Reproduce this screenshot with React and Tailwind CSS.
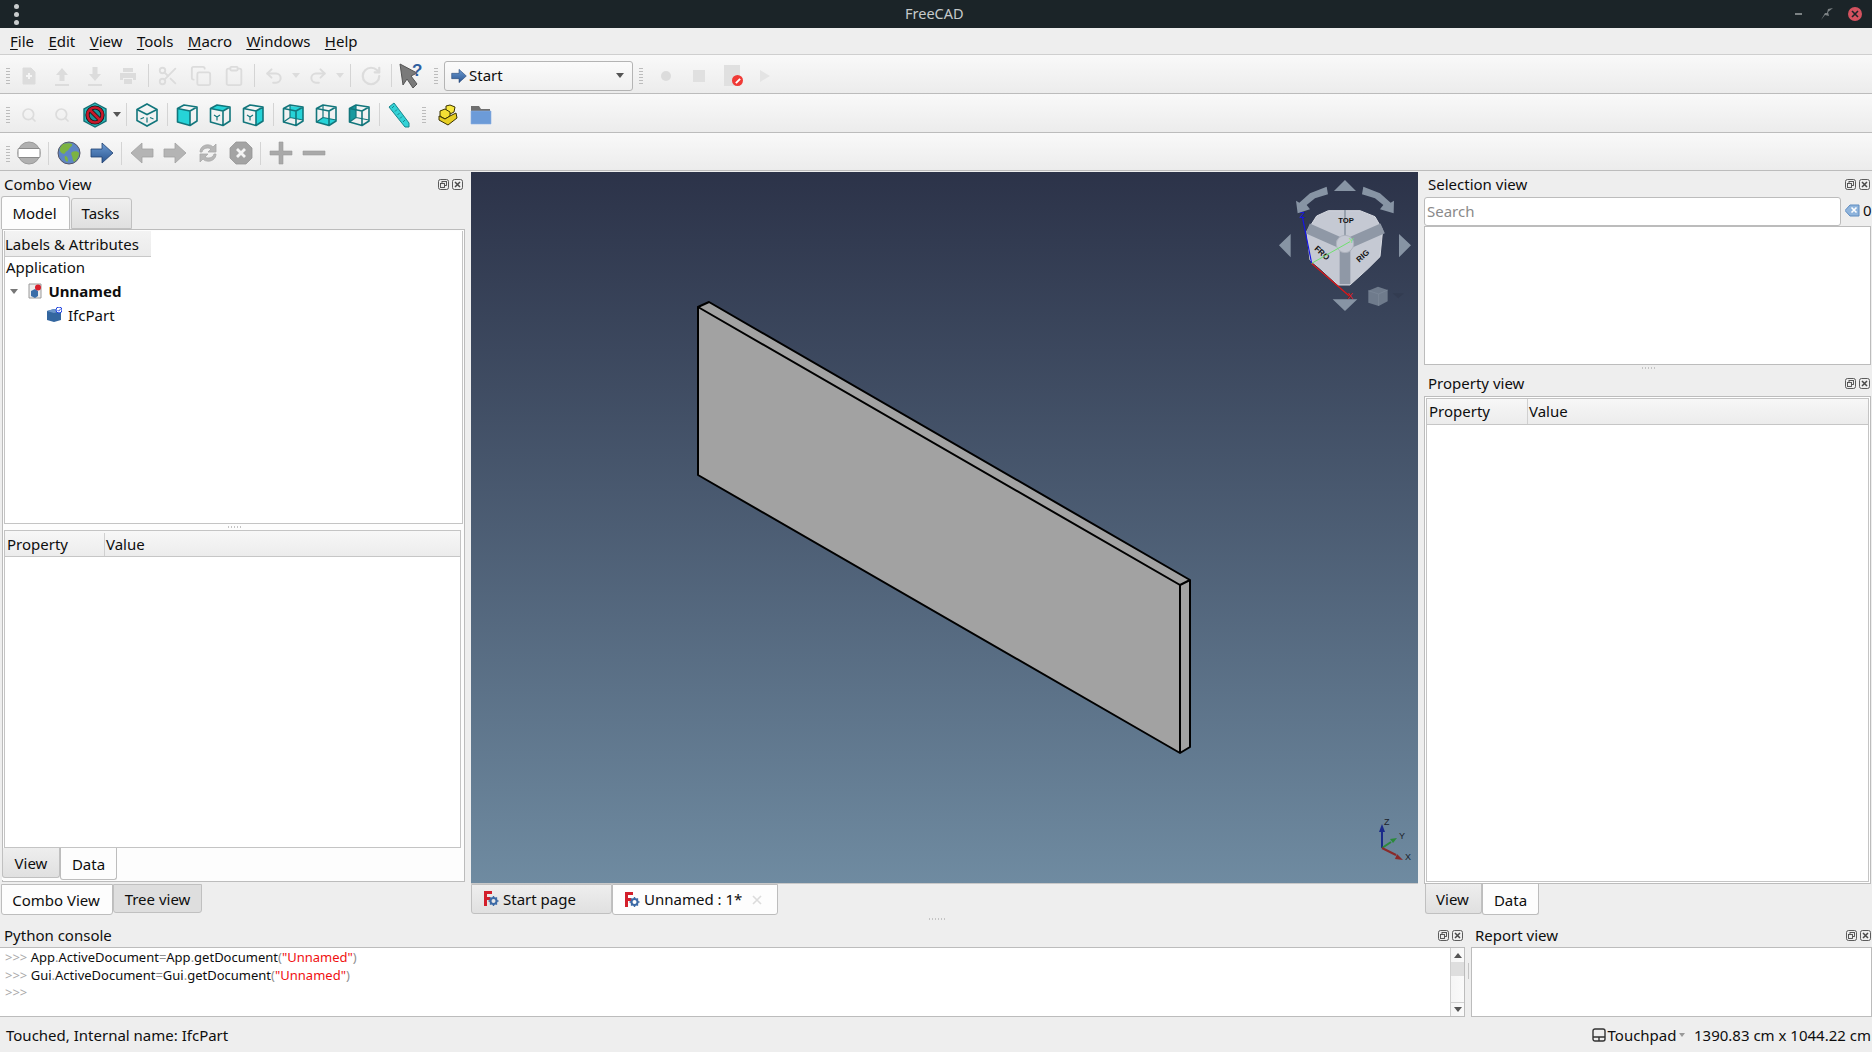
import React from "react";
import { Scissors, Copy, Clipboard, Undo2, Redo2, RotateCw, Search } from "lucide-react";

const D = "#dcdcdc";

const Slot = ({ children, w = "w-[33px]" }) => (
  <div className={`${w} h-full flex items-center justify-center shrink-0`}>{children}</div>
);
const Grip = ({ w = "w-[8px]" }) => (
  <div className={`${w} h-full flex items-center justify-center shrink-0`}>
    <div className="w-[4px] h-[17px] bg-[radial-gradient(circle,#bcbcbc_0.7px,transparent_0.9px)] bg-[length:2px_3px]" />
  </div>
);
const Sep = ({ w = "w-[7px]" }) => (
  <div className={`${w} h-full flex items-center justify-center shrink-0`}>
    <div className="w-[1px] h-[23px] bg-[#d4d4d4]" />
  </div>
);
const Drop = ({ w = "w-[11px]", color = "#dcdcdc" }) => (
  <div className={`${w} h-full flex items-center justify-center shrink-0`}>
    <svg width="8" height="5" viewBox="0 0 8 5"><path d="M0 0h8L4 5z" fill={color} /></svg>
  </div>
);
const Bar = ({ children, h }) => (
  <div className={`${h} shrink-0 flex items-center pl-[4px] pt-[3px] border-b border-[#bcbcbc] bg-gradient-to-b from-[#f9f9f9] to-[#ececec]`}>{children}</div>
);

const Ic = ({ children, s = 24, vb = "0 0 24 24" }) => <svg width={s} height={s} viewBox={vb}>{children}</svg>;

const NewDoc = () => <Ic><path d="M6 4h8l4 4v12H6z" fill={D} stroke={D} strokeLinejoin="round" /><path d="M12 9v6M9 12h6" stroke="#f5f5f5" strokeWidth="2" /></Ic>;
const Up = () => <Ic><path d="M12 4l6 7h-3.5v6h-5v-6H6z M5 20h14v2H5z" fill={D} /></Ic>;
const Down = () => <Ic><path d="M9.5 3h5v7H18l-6 7-6-7h3.5z M5 20h14v2H5z" fill={D} /></Ic>;
const Print = () => <Ic><path d="M7 4h10v4H7z M4 9h16v7h-3v-2H7v2H4z M8 15h8v5H8z" fill={D} /></Ic>;

const WhatsThis = () => (
  <svg width="26" height="28" viewBox="0 0 26 28">
    <path d="M2 2l17 9-6 3 6 8-4 4-6-9-4 6z" fill="#7a7a7a" stroke="#555" strokeWidth="1" />
    <text x="14" y="14" fontFamily="Liberation Sans" fontWeight="700" fontSize="17" fill="#2f5f9f">?</text>
  </svg>
);
const BlueArrow = ({ s = 24, a = "#6b9ad2", b = "#2a5590" }) => (
  <svg width={s} height={s} viewBox="0 0 24 24">
    <defs><linearGradient id={`ba${s}`} x1="0" y1="0" x2="0" y2="1"><stop offset="0" stopColor={a} /><stop offset="1" stopColor={b} /></linearGradient></defs>
    <path d="M1 8h11V2l11 10-11 10v-6H1z" fill={`url(#ba${s})`} stroke="#1e3f6f" strokeWidth="0.8" />
  </svg>
);
const GreyArrow = ({ left }) => (
  <svg width="24" height="24" viewBox="0 0 24 24">
    <g transform={left ? "translate(24 0) scale(-1 1)" : undefined}>
      <path d="M1 8h11V2l11 10-11 10v-6H1z" fill="#b4b4b4" stroke="#a2a2a2" strokeWidth="0.8" />
    </g>
  </svg>
);
const NoHex = () => (
  <svg width="24" height="26" viewBox="0 0 24 26">
    <path d="M12 1l11 6v12l-11 6-11-6V7z" fill="#27b8bb" stroke="#146f74" strokeWidth="1.4" />
    <circle cx="12" cy="13" r="7.5" fill="#1c8f94" stroke="#161616" strokeWidth="4.2" />
    <path d="M7 8l10 10" stroke="#161616" strokeWidth="4.2" />
    <circle cx="12" cy="13" r="7.5" fill="none" stroke="#c8182a" strokeWidth="2.6" />
    <path d="M7 8l10 10" stroke="#c8182a" strokeWidth="2.6" />
  </svg>
);
const C = "#12767c";
const F = "#26d3d8";
const Cube = ({ v }) => {
  const faces = {
    front: "M2.5 5.5L15 8v14.5L2.5 19z",
    top: "M2.5 5.5L9 2l13 2-7 4z",
    right: "M15 8l7-4v14l-7 4.5z",
    rear: "M9 3L22 4.5V17L9 14.5z",
    bottom: "M2.5 19L9 14.5l13 2.5-7 5.5z",
    left: "M2.5 5.5L9 2.5v12L2.5 19z",
  };
  if (v === "iso") {
    return (
      <svg width="24" height="24" viewBox="0 0 24 24" fill="none" stroke={C} strokeWidth="1.6">
        <path d="M12 1l10 5.5v11L12 23 2 17.5v-11z" />
        <path d="M2 6.5l10 5 10-5" />
        <path d="M12 14.5v5M5.5 16l3.5-1.5M18.5 16L15 14.5" strokeWidth="1.2" />
      </svg>
    );
  }
  const solid = v === "front" || v === "top" || v === "right";
  return (
    <svg width="24" height="24" viewBox="0 0 24 24" fill="none" stroke={C} strokeWidth="1.6" strokeLinejoin="round">
      <path d={faces[v]} fill={v === "left" ? "#169aa0" : F} stroke="none" />
      <path d="M2.5 5.5L9 2l13 2-7 4zM15 8v14.5M2.5 5.5L15 8M22 4v14l-7 4.5L2.5 19V5.5" />
      {solid ? (
        v !== "front" && <path d="M9 17.5v-3.5M9 14l-3-2M9 14l3-2" strokeWidth="1.2" />
      ) : (
        <path d="M9 2.5V14.5L2.5 19M9 14.5L22 17" strokeWidth="1.2" />
      )}
    </svg>
  );
};
const Ruler = () => (
  <svg width="22" height="26" viewBox="0 0 22 26">
    <path d="M1 5L6 1l15 20v4l-4 0z" fill="#33d2d6" stroke="#15868c" strokeWidth="1" />
    <path d="M6 4l-2 2M9 7.5l-2 2M11.5 11l-2 2M14 14.5l-2 2M17 18l-2 2" stroke="#15868c" strokeWidth="1" />
  </svg>
);
const Part = () => (
  <svg width="20" height="22" viewBox="0 0 20 22" stroke="#3a3200" strokeWidth="1" strokeLinejoin="round">
    <path d="M8 2l4-1 5 2-1 5-4 2-4-2z" fill="#f8e840" />
    <path d="M2 7l5-2 5 3v4l-5 3-5-3z" fill="#f4de34" />
    <path d="M1 12l6 3 5-3 6-3 1 5-9 7-9-5z" fill="#e8cf24" />
  </svg>
);
const Folder = () => (
  <svg width="22" height="20" viewBox="0 0 22 20">
    <path d="M1 1h8l2 3h9v15H1z" fill="#6f6f6f" />
    <path d="M1 6h20v13H1z" fill="#6c9bd8" stroke="#8ab0e2" strokeWidth="0.6" />
  </svg>
);
const PageGlobe = () => (
  <svg width="24" height="24" viewBox="0 0 24 24">
    <circle cx="12" cy="12" r="11" fill="#b0b0b0" stroke="#9a9a9a" />
    <rect x="1" y="7.5" width="22" height="9" rx="1" fill="#fff" stroke="#8a8a8a" />
  </svg>
);
const Globe = () => (
  <svg width="24" height="24" viewBox="0 0 24 24">
    <circle cx="12" cy="12" r="11" fill="#5e86c4" stroke="#556" strokeWidth="1" />
    <path d="M6 3c3-1 7-1 9 0 1 2-2 3-3 5s-3 2-4 4-4 0-5-2 1-5 3-7zM15 11c2-1 6-1 7 1 0 4-3 8-5 9-2-2-1-4-2-6s-1-3 0-4zM8 15c2 0 3 2 3 4s-1 2-2 1-2-4-1-5z" fill="#7cb342" />
  </svg>
);
const Refresh = () => (
  <svg width="24" height="24" viewBox="0 0 24 24" fill="none">
    <path d="M4 11C4 6 9 3 13 4c2 0 3 1 4 2l3-3v8h-8l3-3c-3-2-8-1-9 3z" fill="#b7b7b7" stroke="#a8a8a8" strokeWidth="0.8" />
    <path d="M20 13c0 5-5 8-9 7-2 0-3-1-4-2l-3 3v-8h8l-3 3c3 2 8 1 9-3z" fill="#b7b7b7" stroke="#a8a8a8" strokeWidth="0.8" />
  </svg>
);
const StopX = () => (
  <svg width="24" height="24" viewBox="0 0 24 24">
    <path d="M7 1h10l6 6v10l-6 6H7l-6-6V7z" fill="#a3a3a3" stroke="#959595" strokeWidth="0.8" />
    <path d="M8 8l8 8M16 8l-8 8" stroke="#f4f4f4" strokeWidth="2.8" />
  </svg>
);
const Plus = () => <Ic><path d="M10 1h4v9h9v4h-9v9h-4v-9H1v-4h9z" fill="#a9a9a9" stroke="#9a9a9a" strokeWidth="0.6" /></Ic>;
const Minus = () => <Ic><path d="M1 10h22v4H1z" fill="#a9a9a9" stroke="#9a9a9a" strokeWidth="0.6" /></Ic>;

const DockBtns = () => (
  <div className="flex gap-[3px]">
    <svg width="11" height="11" viewBox="0 0 11 11" fill="none" stroke="#4a4a4a" strokeWidth="0.9"><rect x="0.5" y="0.5" width="10" height="10" rx="2" /><rect x="4" y="2.5" width="4.5" height="4" /><rect x="2.5" y="4.5" width="4" height="4" fill="#eee" /></svg>
    <svg width="11" height="11" viewBox="0 0 11 11" fill="none" stroke="#4a4a4a"><rect x="0.5" y="0.5" width="10" height="10" rx="2" strokeWidth="0.9" /><path d="M3 3l5 5M8 3l-5 5" strokeWidth="1.5" /></svg>
  </div>
);

const DocIcon = () => (
  <svg width="14" height="16" viewBox="0 0 14 16">
    <path d="M1 1h12v14H1z" fill="#ededed" stroke="#9a9a9a" />
    <path d="M3 8l4-2 3 2v5l-3 2-4-2z" fill="#3a6da8" />
    <circle cx="10" cy="4.5" r="3" fill="#d8202c" />
  </svg>
);
const PartIcon = () => (
  <svg width="16" height="16" viewBox="0 0 16 16">
    <path d="M1 4l7-2 7 2v9l-7 2-7-2z" fill="#33669f" />
    <path d="M1 4l7-2 7 2-7 2z" fill="#6a95c9" />
    <circle cx="13" cy="3" r="3" fill="#fff" stroke="#1c3fe0" strokeWidth="1" />
    <path d="M11.5 3l1.2 1.2 2-2.4" stroke="#1c3fe0" fill="none" strokeWidth="0.9" />
  </svg>
);
const FcIcon = () => (
  <svg width="16" height="16" viewBox="0 0 16 16">
    <path d="M1 0h8v3H4v3h3v3H4v6H1z" fill="#d31f2b" />
    <circle cx="10.5" cy="10" r="3" fill="none" stroke="#3c6aa6" strokeWidth="2" />
    <path d="M10.5 5v2M10.5 13v2M5.5 10h2M13.5 10h2M7 6.5l1.4 1.4M12.6 12.1l1.4 1.4M14 6.5l-1.4 1.4M8.4 12.1L7 13.5" stroke="#3c6aa6" strokeWidth="1.4" />
  </svg>
);

const Header = ({ first, pad = "" }) => (
  <div className={`h-[26px] shrink-0 flex border-b border-[#c6c6c6] bg-gradient-to-b from-[#f7f7f7] to-[#ececec] ${pad}`}>
    <div className={`${first} pl-[2px] flex items-center border-r border-[#d0d0d0]`}>Property</div>
    <div className="pl-[1px] flex items-center">Value</div>
  </div>
);

const TabOn = ({ cls = "", children }) => (
  <div className={`${cls} bg-[#fdfdfd] border border-[#bdbdbd] flex items-center justify-center shrink-0`}>{children}</div>
);
const TabOff = ({ cls = "", children }) => (
  <div className={`${cls} bg-gradient-to-b from-[#eeeeee] to-[#e0e0e0] border border-[#c0c0c0] flex items-center justify-center shrink-0`}>{children}</div>
);

const Viewport = () => (
  <div className="relative w-[947px] h-[711px] shrink-0 bg-gradient-to-b from-[#2c3349] to-[#6f8ba1]">
    <svg className="absolute inset-0" width="947" height="711" viewBox="471 172 947 711">
      <path d="M698 307L709 302L1190 580V747L1180 753L698 475Z" fill="#a2a2a2" stroke="#000" strokeWidth="2" strokeLinejoin="round" />
      <path d="M698 307L1180 585V753M1180 585L1190 580" fill="none" stroke="#000" strokeWidth="2" />
      <g transform="translate(1260 160) scale(0.3333)">
        <path d="M255 60l33 33h-66zM218 418h74l-37 35zM57 256l35-34v70zM453 256l-36-34v70z" fill="#8794a4" />
        <path d="M200 80l4 23-39 12-25 20 10 13-37 12-5-38 10 6 32-28z" fill="#8794a4" />
        <path d="M310 80l-4 23 39 12 25 20-10 13 41 12 1-38-10 6-32-28z" fill="#8794a4" />
        <path d="M170 168l35-16h95l45 18 23 40-8 80-35 35-55 50h-35l-55-50-30-25-10-85z" fill="#c5c9d3" stroke="#d8dbe2" strokeWidth="3" />
        <path d="M143 205l112 50 113-50M255 255v118" fill="none" stroke="#8f98a6" strokeWidth="32" />
        <path d="M255 150v80" stroke="#8f98a6" strokeWidth="5" />
        <circle cx="255" cy="252" r="26" fill="#c5c9d3" stroke="#aeb3bd" strokeWidth="3" />
        <text x="235" y="188" fontSize="23" fontFamily="Liberation Sans" fontWeight="700" fill="#111">TOP</text>
        <text transform="translate(162 268) rotate(42)" fontSize="24" fontFamily="Liberation Sans" fontWeight="700" fill="#111">FRO</text>
        <text transform="translate(298 308) rotate(-42)" fontSize="24" fontFamily="Liberation Sans" fontWeight="700" fill="#111">RIG</text>
        <path d="M155 310L127 170" stroke="#1414e6" strokeWidth="3.5" />
        <path d="M155 310L268 408" stroke="#e61414" strokeWidth="3.5" />
        <path d="M155 310L270 245" stroke="#6fe06f" strokeWidth="3" />
        <text x="119" y="174" fontSize="26" fontFamily="Liberation Sans" fill="#1414e6">Z</text>
        <text x="262" y="418" fontSize="26" fontFamily="Liberation Sans" fill="#e61414">X</text>
        <text x="266" y="248" fontSize="24" fontFamily="Liberation Sans" fill="#6fe06f">Y</text>
        <path d="M325 392l29-12 29 10v34l-27 14-31-10z" fill="#6f7b8c" />
        <path d="M325 392l31 10 27-12M356 402v36" fill="none" stroke="#7f8b9b" strokeWidth="2" />
        <path d="M398 400h34l-17 15z" fill="#333c51" />
      </g>
      <path d="M1382 848v-18" stroke="#1a2a8a" strokeWidth="2" />
      <path d="M1382 824l3 8h-6z" fill="#1a2a8a" />
      <path d="M1382 848l9-6" stroke="#2b8a3a" strokeWidth="2" />
      <path d="M1397 838l-7 1 3 4z" fill="#2b8a3a" />
      <path d="M1382 848l14 7" stroke="#8a2a2a" strokeWidth="2" />
      <path d="M1403 860l-8-1 2-5z" fill="#8a2a2a" />
      <text x="1384" y="825" fontSize="9" fontFamily="Liberation Sans" fill="#1b1f2a">Z</text>
      <text x="1399" y="839" fontSize="9" fontFamily="Liberation Sans" fill="#1b1f2a">Y</text>
      <text x="1405" y="860" fontSize="9" fontFamily="Liberation Sans" fill="#1b1f2a">X</text>
    </svg>
  </div>
);

const Dots = ({ cls }) => <div className={`${cls} bg-[radial-gradient(circle,#c4c4c4_0.7px,transparent_0.9px)] bg-[length:3px_2px]`} />;

const Py = ({ a, b, c }) => (
  <div className="h-[17.5px] flex items-center whitespace-pre">
    <span className="text-[#a8a8a8]">{">>> "}</span>
    <span>{a}</span><span className="text-[#909090]">.</span><span>{b}</span><span className="text-[#909090]">=</span>
    <span>{a}</span><span className="text-[#909090]">.</span><span>{c}</span>
    <span className="text-[#909090]">(</span><span className="text-[#f01010]">"Unnamed"</span><span className="text-[#909090]">)</span>
  </div>
);

export default function App() {
  return (
    <div className="w-[1872px] h-[1052px] overflow-hidden flex flex-col bg-[#eeeeee] text-[#0e0e0e] text-[15px] font-['Noto_Sans',sans-serif]">
      {/* Title bar */}
      <div className="h-[28px] shrink-0 bg-[#1b2428] flex items-center justify-between pl-[14px] pr-[10px] relative">
        <div className="flex flex-col gap-[3px]">
          <div className="w-[5px] h-[5px] rounded-full bg-[#c9cccd]" />
          <div className="w-[5px] h-[5px] rounded-full bg-[#c9cccd]" />
          <div className="w-[5px] h-[5px] rounded-full bg-[#c9cccd]" />
        </div>
        <div className="text-[#c6cacb] text-[14.5px] absolute left-[905px] top-[3px]">FreeCAD</div>
        <div className="flex items-center gap-[14px]">
          <svg width="14" height="14" viewBox="0 0 14 14"><path d="M3 6h7v2H3z" fill="#7c8284" /></svg>
          <svg width="14" height="14" viewBox="0 0 14 14"><path d="M13 1L8 5 9 9 5 8 1 13 5 6 7 6 8 2z" fill="#7c8284" /></svg>
          <div className="w-[14px] h-[14px] rounded-full bg-[#d4525f] flex items-center justify-center">
            <svg width="8" height="8" viewBox="0 0 8 8"><path d="M1 1l6 6M7 1l-6 6" stroke="#1b2428" strokeWidth="1.6" /></svg>
          </div>
        </div>
      </div>

      {/* Menu */}
      <div className="h-[27px] shrink-0 border-b border-[#cfcfcf] flex items-center pl-[10px] gap-[14.4px]">
        <span><u className="underline-offset-2">F</u>ile</span>
        <span><u className="underline-offset-2">E</u>dit</span>
        <span><u className="underline-offset-2">V</u>iew</span>
        <span><u className="underline-offset-2">T</u>ools</span>
        <span><u className="underline-offset-2">M</u>acro</span>
        <span><u className="underline-offset-2">W</u>indows</span>
        <span><u className="underline-offset-2">H</u>elp</span>
      </div>

      {/* Toolbar 1 */}
      <Bar h="h-[39px]">
        <Grip w="w-[8.5px]" />
        <Slot><NewDoc /></Slot><Slot><Up /></Slot><Slot><Down /></Slot><Slot><Print /></Slot>
        <Sep />
        <Slot><Scissors size={22} color={D} strokeWidth={2} /></Slot>
        <Slot><Copy size={22} color={D} strokeWidth={2} /></Slot>
        <Slot><Clipboard size={22} color={D} strokeWidth={2} /></Slot>
        <Sep />
        <Slot><Undo2 size={20} color={D} strokeWidth={2.4} /></Slot><Drop />
        <Slot><Redo2 size={20} color={D} strokeWidth={2.4} /></Slot><Drop />
        <Sep w="w-[9px]" />
        <Slot><RotateCw size={22} color={D} strokeWidth={2.4} /></Slot>
        <Sep />
        <Slot><WhatsThis /></Slot>
        <Grip w="w-[16.5px]" />
        <div className="w-[189px] h-[30px] shrink-0 rounded-[3px] border border-[#b4b4b4] bg-gradient-to-b from-[#fbfbfb] to-[#efefef] flex items-center pl-[6px] pr-[8px] gap-[2px]">
          <BlueArrow s={16} />
          <span className="flex-1">Start</span>
          <Drop w="w-[8px]" color="#555" />
        </div>
        <Grip w="w-[16.5px]" />
        <Slot><div className="w-[10px] h-[10px] rounded-full bg-[#dcdcdc]" /></Slot>
        <Slot><div className="w-[12px] h-[12px] bg-[#e0e0e0]" /></Slot>
        <Slot>
          <div className="relative w-[16px] h-[21px] bg-[#e0e0e0]">
            <div className="absolute -right-[3px] -bottom-[0px] w-[11px] h-[11px] rounded-full bg-[#f03a36] flex items-center justify-center">
              <div className="w-[6px] h-[2px] bg-white -rotate-45" />
            </div>
          </div>
        </Slot>
        <Slot><svg width="12" height="14" viewBox="0 0 12 14"><path d="M1 1l10 6-10 6z" fill="#e4e4e4" /></svg></Slot>
      </Bar>

      {/* Toolbar 2 */}
      <Bar h="h-[39px]">
        <Grip w="w-[8.5px]" />
        <Slot><Search size={16} color={D} strokeWidth={2.6} /></Slot>
        <Slot><Search size={16} color={D} strokeWidth={2.6} /></Slot>
        <Slot><NoHex /></Slot>
        <Drop w="w-[11px]" color="#555" />
        <Sep w="w-[8px]" />
        <Slot><Cube v="iso" /></Slot>
        <Sep />
        <Slot><Cube v="front" /></Slot><Slot><Cube v="top" /></Slot><Slot><Cube v="right" /></Slot>
        <Sep />
        <Slot><Cube v="rear" /></Slot><Slot><Cube v="bottom" /></Slot><Slot><Cube v="left" /></Slot>
        <Sep />
        <Slot><Ruler /></Slot>
        <Grip w="w-[16px]" />
        <Slot><Part /></Slot>
        <Slot><Folder /></Slot>
      </Bar>

      {/* Toolbar 3 */}
      <Bar h="h-[38px]">
        <Grip />
        <Slot><PageGlobe /></Slot>
        <Sep />
        <Slot><Globe /></Slot><Slot><BlueArrow /></Slot>
        <Sep />
        <Slot><GreyArrow left /></Slot><Slot><GreyArrow /></Slot><Slot><Refresh /></Slot><Slot><StopX /></Slot>
        <Sep />
        <Slot><Plus /></Slot><Slot><Minus /></Slot>
      </Bar>

      {/* Upper area */}
      <div className="h-[747px] shrink-0 flex">
        {/* Left */}
        <div className="w-[466px] shrink-0 flex flex-col">
          <div className="h-[26px] shrink-0 flex items-center justify-between pl-[4px] pr-[3px]">
            <span>Combo View</span><DockBtns />
          </div>
          <div className="h-[32px] shrink-0 flex items-end pl-[1px] gap-[1px]">
            <TabOn cls="w-[69px] h-[33px] rounded-t-[3px] border-b-0 pr-[2px]">Model</TabOn>
            <TabOff cls="w-[61px] h-[31px] rounded-t-[3px] pr-[2px]">Tasks</TabOff>
          </div>
          <div className="ml-[2px] w-[463px] h-[653px] shrink-0 border border-[#bcbcbc] bg-[#fdfdfd] flex flex-col p-[1px]">
            <div className="h-[293px] shrink-0 border-x border-b border-[#c4c4c4] bg-white flex flex-col">
              <div className="h-[26px] w-[146px] shrink-0 bg-gradient-to-b from-[#f3f3f3] to-[#ebebeb] border-b border-[#c8c8c8] pt-[2px] flex items-center">Labels &amp; Attributes</div>
              <div className="h-[23px] -mt-[1px] flex items-center pl-[1px]">Application</div>
              <div className="h-[24px] flex items-center pl-[3.5px]">
                <Drop w="w-[10px]" color="#777" />
                <div className="ml-[9px] mr-[7px]"><DocIcon /></div>
                <b>Unnamed</b>
              </div>
              <div className="h-[24px] flex items-center pl-[41px]">
                <PartIcon /><span className="ml-[6px]">IfcPart</span>
              </div>
            </div>
            <div className="h-[6px] shrink-0 flex justify-center items-center"><Dots cls="w-[14px] h-[2px]" /></div>
            <div className="h-[318px] shrink-0 mr-[2px] border border-[#c4c4c4] bg-white flex flex-col">
              <Header first="w-[100px]" pad="pt-[2px]" />
            </div>
            <div className="flex-1 flex items-start -ml-[2px] bg-[#fdfdfd]">
              <TabOff cls="w-[58px] h-[30px] rounded-b-[3px] border-t-0 pt-[2px]">View</TabOff>
              <TabOn cls="w-[57px] h-[32px] rounded-b-[3px] border-t-0 pt-[2px]">Data</TabOn>
            </div>
          </div>
          <div className="flex items-start pl-[1px] mt-[2px]">
            <TabOn cls="w-[112px] h-[31px] rounded-b-[3px] pt-[1px] pr-[2px]">Combo View</TabOn>
            <div className="w-[89px] h-[29px] shrink-0 rounded-b-[3px] bg-[#dedede] border border-[#c0c0c0] flex items-center justify-center pt-[1px]">Tree view</div>
          </div>
        </div>

        {/* Center */}
        <div className="ml-[5px] w-[947px] shrink-0 flex flex-col pt-[1px]">
          <Viewport />
          <div className="h-[1px] bg-[#c8c8c8] shrink-0" />
          <div className="flex items-start">
            <TabOff cls="w-[141px] h-[30px] rounded-b-[3px] justify-start pl-[11px] gap-[4px]"><FcIcon /><span>Start page</span></TabOff>
            <TabOn cls="w-[166px] h-[31px] rounded-b-[3px] justify-start pl-[11px] gap-[4px]">
              <FcIcon /><span>Unnamed : 1*</span>
              <svg className="ml-[6px]" width="10" height="10" viewBox="0 0 10 10"><path d="M1 1l8 8M9 1l-8 8" stroke="#dcdcdc" strokeWidth="1.6" /></svg>
            </TabOn>
          </div>
        </div>

        {/* Right */}
        <div className="ml-[6px] w-[448px] shrink-0 flex flex-col">
          <div className="h-[26px] shrink-0 flex items-center justify-between pl-[4px] pr-[2px]">
            <span>Selection view</span><DockBtns />
          </div>
          <div className="h-[29px] shrink-0 flex items-start">
            <div className="w-[417px] h-[29px] rounded-[3px] border border-[#bcbcbc] bg-white text-[#8a8a8a] pl-[2px] flex items-center">Search</div>
            <svg className="ml-[4px] mt-[7px]" width="15" height="13" viewBox="0 0 15 13"><path d="M5 1h9v11H5L0 6.5z" fill="#8fb4dc" stroke="#5f8cc0" /><path d="M6.5 3.5l5 5M11.5 3.5l-5 5" stroke="#fff" strokeWidth="1.6" /></svg>
            <span className="ml-[3px] mt-[2px] w-[9px] overflow-hidden">0</span>
          </div>
          <div className="h-[139px] w-[447px] shrink-0 border border-[#bcbcbc] bg-white" />
          <div className="h-[5px] shrink-0 flex justify-center items-center"><Dots cls="w-[14px] h-[2px]" /></div>
          <div className="h-[26px] shrink-0 flex items-center justify-between pl-[4px] pr-[2px]">
            <span>Property view</span><DockBtns />
          </div>
          <div className="h-[488px] w-[447px] shrink-0 border border-[#bcbcbc] bg-white p-[1px]">
            <div className="h-full border border-[#c4c4c4] bg-white">
              <Header first="w-[101px]" />
            </div>
          </div>
          <div className="flex items-start pl-[1px]">
            <TabOff cls="w-[57px] h-[30px] rounded-b-[3px] border-t-0 pt-[2px] pr-[2px]">View</TabOff>
            <TabOn cls="w-[57px] h-[31px] rounded-b-[3px] border-t-0 pt-[2px]">Data</TabOn>
          </div>
        </div>
      </div>

      <div className="h-[7px] shrink-0 flex justify-center items-start"><Dots cls="w-[18px] h-[2px] ml-[2px]" /></div>

      {/* Dock */}
      <div className="h-[92px] shrink-0 flex">
        <div className="w-[1465px] shrink-0 flex flex-col">
          <div className="h-[22px] shrink-0 flex items-center justify-between pl-[4px] pr-[2px] pb-[2px]">
            <span>Python console</span><DockBtns />
          </div>
          <div className="h-[70px] shrink-0 flex border-y border-r border-[#bcbcbc] bg-white">
            <div className="flex-1 pt-[1px] pl-[5px] text-[13px] leading-[17.5px]">
              <Py a="App" b="ActiveDocument" c="getDocument" />
              <Py a="Gui" b="ActiveDocument" c="getDocument" />
              <div className="h-[17.5px] text-[#a8a8a8]">{">>>"}</div>
            </div>
            <div className="w-[14px] border-l border-[#cfcfcf] flex flex-col bg-gradient-to-r from-[#f5f5f5] to-[#fafafa]">
              <div className="h-[14px] flex items-center justify-center"><svg width="8" height="5" viewBox="0 0 8 5"><path d="M4 0l4 5H0z" fill="#555" /></svg></div>
              <div className="h-[14px] bg-[#dedede]" />
              <div className="flex-1" />
              <div className="h-[14px] flex items-center justify-center border-t border-[#cfcfcf]"><svg width="8" height="5" viewBox="0 0 8 5"><path d="M0 0h8L4 5z" fill="#555" /></svg></div>
            </div>
          </div>
        </div>
        <div className="w-[6px] shrink-0 flex items-center justify-center"><Dots cls="w-[2px] h-[16px] bg-[length:2px_3px]" /></div>
        <div className="w-[401px] shrink-0 flex flex-col">
          <div className="h-[22px] shrink-0 flex items-center justify-between pl-[4px] pr-[1px] pb-[2px]">
            <span>Report view</span><DockBtns />
          </div>
          <div className="h-[70px] shrink-0 border border-[#bcbcbc] bg-white" />
        </div>
      </div>

      {/* Status */}
      <div className="flex-1 flex items-center justify-between pl-[6px] pr-[1px] pt-[1px]">
        <span>Touched, Internal name: IfcPart</span>
        <div className="flex items-center">
          <svg width="14" height="14" viewBox="0 0 14 14" fill="none" stroke="#333" strokeWidth="1.4"><rect x="1" y="1" width="12" height="12" rx="2" /><path d="M1 9h12M7 9v4" /></svg>
          <span className="ml-[2px]">Touchpad</span>
          <svg className="ml-[2px] mr-[9.5px]" width="6" height="4" viewBox="0 0 6 4"><path d="M0 0h6L3 4z" fill="#999" /></svg>
          <span>1390.83 cm x 1044.22 cm</span>
        </div>
      </div>
    </div>
  );
}
